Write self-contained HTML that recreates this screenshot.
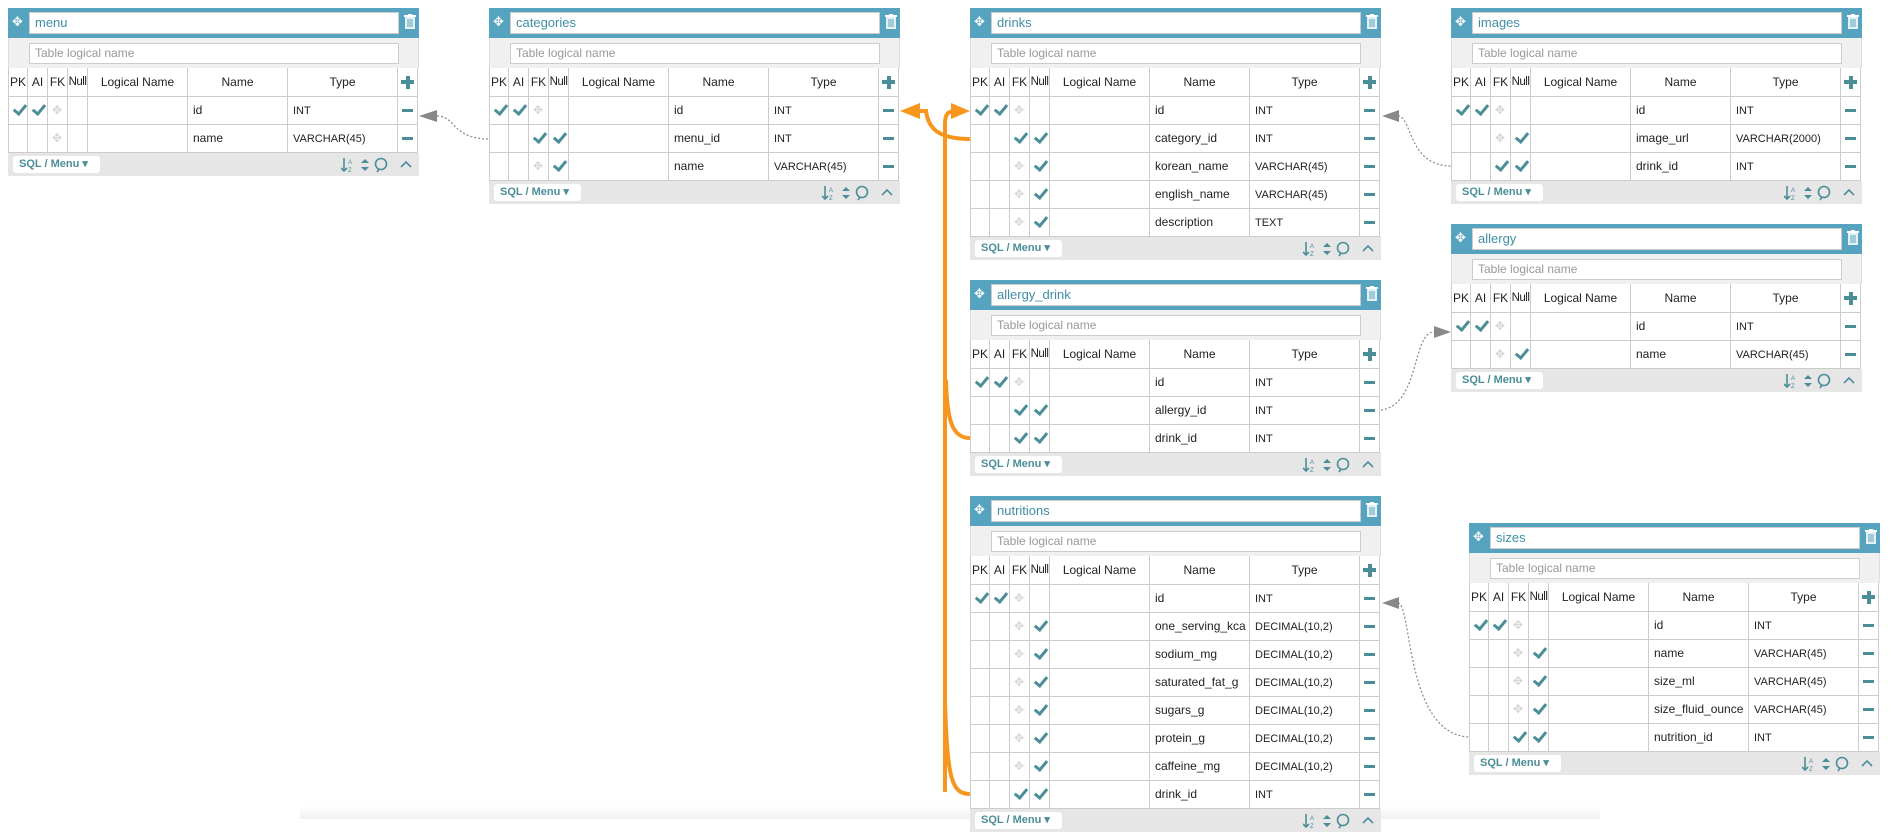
<!DOCTYPE html>
<html><head><meta charset="utf-8"><style>
body{margin:0;width:1902px;height:819px;overflow:hidden;background:#fff;font-family:"Liberation Sans",sans-serif;position:relative}
.t{position:absolute;width:411px;font-size:12px;color:#222;background:#fff}
.h{height:30px;background:#56a3bf;position:relative}
.mvw{position:absolute;left:4px;top:6px;color:#fff;font-size:13px}
.h .in{position:absolute;left:21px;top:4px;width:370px;height:22px;background:#fff;border:1px solid #ccc;box-sizing:border-box;color:#3f8ea6;font-size:13px;line-height:20px;padding-left:5px}
.tr{position:absolute;right:3px;top:6px}
.l{height:30px;background:#f0f0f0;position:relative;border-left:1px solid #ddd;border-right:1px solid #ddd;box-sizing:border-box}
.l .in2{position:absolute;left:20px;top:5px;width:370px;height:21px;background:#fff;border:1px solid #ccc;box-sizing:border-box;color:#999;font-size:12px;line-height:19px;padding-left:5px}
.r{display:grid;grid-template-columns:19px 20px 20px 20px 100px 100px 110px 20px;height:28px;border-left:1px solid #ccc}
.r i{font-style:normal;border-right:1px solid #ccc;border-bottom:1px solid #ccc;line-height:27px;position:relative;overflow:hidden;white-space:nowrap}
.r i:nth-child(6),.r i:nth-child(7){padding-left:5px}
.r i:nth-child(7){font-size:11px;line-height:28px}
.hd{height:29px}
.hd i{text-align:center;line-height:28px;font-size:12px;color:#222;padding-left:0!important}
.hd i:nth-child(4){font-size:11.5px;letter-spacing:-.5px}
.hd i:nth-child(7){font-size:12px}
.k{position:absolute;left:7px;top:5px;width:5px;height:10px;border-right:3px solid #4b8e98;border-bottom:3px solid #4b8e98;transform:rotate(40deg)}
.u{position:absolute;left:4px;top:0;color:#d4d4d4;font-size:12px}
.m::after{content:"";position:absolute;left:4px;top:12px;width:11px;height:3px;background:#4b8e98}
.p::before{content:"";position:absolute;left:3px;top:12px;width:13px;height:4px;background:#4b8e98}
.p::after{content:"";position:absolute;left:7.5px;top:7.5px;width:4px;height:13px;background:#4b8e98}
.f{height:23px;background:#e6e6e6;position:relative}
.sq{position:absolute;left:5px;top:3px;width:81px;height:17px;background:#fff;border-radius:3px;color:#4b8e98;font-weight:bold;font-size:11px;line-height:17px;padding-left:6px}
.fi{position:absolute;right:6px;top:4px}
svg.ln{position:absolute;left:0;top:0;pointer-events:none}
.bot{position:absolute;left:300px;top:806px;width:1300px;height:13px;background:linear-gradient(#fff,#f0f0f0)}
</style></head><body>
<div class="bot"></div>

<!-- menu -->
<div class="t" style="left:8px;top:8px">
<div class="h"><span class="mvw">✥</span><div class="in">menu</div><span class="tr"><svg width="12" height="16"><rect x="1" y="3" width="10" height="12" fill="#fff" opacity=".85"/><rect x="0" y="1" width="12" height="2" fill="#fff"/><rect x="4" y="0" width="4" height="2" fill="#fff"/><path d="M4 5v8M6 5v8M8 5v8" stroke="#56a3bf"/></svg></span></div>
<div class="l"><div class="in2">Table logical name</div></div>
<div class="r hd"><i>PK</i><i>AI</i><i>FK</i><i>Null</i><i>Logical Name</i><i>Name</i><i>Type</i><i class="p"></i></div>
<div class="r"><i><s class="k"></s></i><i><s class="k"></s></i><i><span class="u">✥</span></i><i></i><i></i><i>id</i><i>INT</i><i class="m"></i></div>
<div class="r"><i></i><i></i><i><span class="u">✥</span></i><i></i><i></i><i>name</i><i>VARCHAR(45)</i><i class="m"></i></div>
<div class="f"><span class="sq">SQL / Menu ▾</span><span class="fi"><svg width="72" height="16" fill="none" stroke="#4b8e98" stroke-width="1.6"><path d="M3 1v13M0 11l3 3 3-3"/><text x="7" y="7" font-size="6" fill="#4b8e98" stroke="none" font-family="Liberation Sans">A</text><text x="7" y="15" font-size="6" fill="#4b8e98" stroke="none" font-family="Liberation Sans">Z</text><path d="M20 6l4-4 4 4zM20 10l4 4 4-4z" fill="#4b8e98" stroke="none"/><circle cx="40" cy="7" r="5.5"/><path d="M38 12l-2 3"/><path d="M60 10l5-5 5 5"/></svg></span></div>
</div>

<!-- categories -->
<div class="t" style="left:489px;top:8px">
<div class="h"><span class="mvw">✥</span><div class="in">categories</div><span class="tr"><svg width="12" height="16"><rect x="1" y="3" width="10" height="12" fill="#fff" opacity=".85"/><rect x="0" y="1" width="12" height="2" fill="#fff"/><rect x="4" y="0" width="4" height="2" fill="#fff"/><path d="M4 5v8M6 5v8M8 5v8" stroke="#56a3bf"/></svg></span></div>
<div class="l"><div class="in2">Table logical name</div></div>
<div class="r hd"><i>PK</i><i>AI</i><i>FK</i><i>Null</i><i>Logical Name</i><i>Name</i><i>Type</i><i class="p"></i></div>
<div class="r"><i><s class="k"></s></i><i><s class="k"></s></i><i><span class="u">✥</span></i><i></i><i></i><i>id</i><i>INT</i><i class="m"></i></div>
<div class="r"><i></i><i></i><i><s class="k"></s></i><i><s class="k"></s></i><i></i><i>menu_id</i><i>INT</i><i class="m"></i></div>
<div class="r"><i></i><i></i><i><span class="u">✥</span></i><i><s class="k"></s></i><i></i><i>name</i><i>VARCHAR(45)</i><i class="m"></i></div>
<div class="f"><span class="sq">SQL / Menu ▾</span><span class="fi"><svg width="72" height="16" fill="none" stroke="#4b8e98" stroke-width="1.6"><path d="M3 1v13M0 11l3 3 3-3"/><text x="7" y="7" font-size="6" fill="#4b8e98" stroke="none" font-family="Liberation Sans">A</text><text x="7" y="15" font-size="6" fill="#4b8e98" stroke="none" font-family="Liberation Sans">Z</text><path d="M20 6l4-4 4 4zM20 10l4 4 4-4z" fill="#4b8e98" stroke="none"/><circle cx="40" cy="7" r="5.5"/><path d="M38 12l-2 3"/><path d="M60 10l5-5 5 5"/></svg></span></div>
</div>

<!-- drinks -->
<div class="t" style="left:970px;top:8px">
<div class="h"><span class="mvw">✥</span><div class="in">drinks</div><span class="tr"><svg width="12" height="16"><rect x="1" y="3" width="10" height="12" fill="#fff" opacity=".85"/><rect x="0" y="1" width="12" height="2" fill="#fff"/><rect x="4" y="0" width="4" height="2" fill="#fff"/><path d="M4 5v8M6 5v8M8 5v8" stroke="#56a3bf"/></svg></span></div>
<div class="l"><div class="in2">Table logical name</div></div>
<div class="r hd"><i>PK</i><i>AI</i><i>FK</i><i>Null</i><i>Logical Name</i><i>Name</i><i>Type</i><i class="p"></i></div>
<div class="r"><i><s class="k"></s></i><i><s class="k"></s></i><i><span class="u">✥</span></i><i></i><i></i><i>id</i><i>INT</i><i class="m"></i></div>
<div class="r"><i></i><i></i><i><s class="k"></s></i><i><s class="k"></s></i><i></i><i>category_id</i><i>INT</i><i class="m"></i></div>
<div class="r"><i></i><i></i><i><span class="u">✥</span></i><i><s class="k"></s></i><i></i><i>korean_name</i><i>VARCHAR(45)</i><i class="m"></i></div>
<div class="r"><i></i><i></i><i><span class="u">✥</span></i><i><s class="k"></s></i><i></i><i>english_name</i><i>VARCHAR(45)</i><i class="m"></i></div>
<div class="r"><i></i><i></i><i><span class="u">✥</span></i><i><s class="k"></s></i><i></i><i>description</i><i>TEXT</i><i class="m"></i></div>
<div class="f"><span class="sq">SQL / Menu ▾</span><span class="fi"><svg width="72" height="16" fill="none" stroke="#4b8e98" stroke-width="1.6"><path d="M3 1v13M0 11l3 3 3-3"/><text x="7" y="7" font-size="6" fill="#4b8e98" stroke="none" font-family="Liberation Sans">A</text><text x="7" y="15" font-size="6" fill="#4b8e98" stroke="none" font-family="Liberation Sans">Z</text><path d="M20 6l4-4 4 4zM20 10l4 4 4-4z" fill="#4b8e98" stroke="none"/><circle cx="40" cy="7" r="5.5"/><path d="M38 12l-2 3"/><path d="M60 10l5-5 5 5"/></svg></span></div>
</div>

<!-- images -->
<div class="t" style="left:1451px;top:8px">
<div class="h"><span class="mvw">✥</span><div class="in">images</div><span class="tr"><svg width="12" height="16"><rect x="1" y="3" width="10" height="12" fill="#fff" opacity=".85"/><rect x="0" y="1" width="12" height="2" fill="#fff"/><rect x="4" y="0" width="4" height="2" fill="#fff"/><path d="M4 5v8M6 5v8M8 5v8" stroke="#56a3bf"/></svg></span></div>
<div class="l"><div class="in2">Table logical name</div></div>
<div class="r hd"><i>PK</i><i>AI</i><i>FK</i><i>Null</i><i>Logical Name</i><i>Name</i><i>Type</i><i class="p"></i></div>
<div class="r"><i><s class="k"></s></i><i><s class="k"></s></i><i><span class="u">✥</span></i><i></i><i></i><i>id</i><i>INT</i><i class="m"></i></div>
<div class="r"><i></i><i></i><i><span class="u">✥</span></i><i><s class="k"></s></i><i></i><i>image_url</i><i>VARCHAR(2000)</i><i class="m"></i></div>
<div class="r"><i></i><i></i><i><s class="k"></s></i><i><s class="k"></s></i><i></i><i>drink_id</i><i>INT</i><i class="m"></i></div>
<div class="f"><span class="sq">SQL / Menu ▾</span><span class="fi"><svg width="72" height="16" fill="none" stroke="#4b8e98" stroke-width="1.6"><path d="M3 1v13M0 11l3 3 3-3"/><text x="7" y="7" font-size="6" fill="#4b8e98" stroke="none" font-family="Liberation Sans">A</text><text x="7" y="15" font-size="6" fill="#4b8e98" stroke="none" font-family="Liberation Sans">Z</text><path d="M20 6l4-4 4 4zM20 10l4 4 4-4z" fill="#4b8e98" stroke="none"/><circle cx="40" cy="7" r="5.5"/><path d="M38 12l-2 3"/><path d="M60 10l5-5 5 5"/></svg></span></div>
</div>

<!-- allergy -->
<div class="t" style="left:1451px;top:224px">
<div class="h"><span class="mvw">✥</span><div class="in">allergy</div><span class="tr"><svg width="12" height="16"><rect x="1" y="3" width="10" height="12" fill="#fff" opacity=".85"/><rect x="0" y="1" width="12" height="2" fill="#fff"/><rect x="4" y="0" width="4" height="2" fill="#fff"/><path d="M4 5v8M6 5v8M8 5v8" stroke="#56a3bf"/></svg></span></div>
<div class="l"><div class="in2">Table logical name</div></div>
<div class="r hd"><i>PK</i><i>AI</i><i>FK</i><i>Null</i><i>Logical Name</i><i>Name</i><i>Type</i><i class="p"></i></div>
<div class="r"><i><s class="k"></s></i><i><s class="k"></s></i><i><span class="u">✥</span></i><i></i><i></i><i>id</i><i>INT</i><i class="m"></i></div>
<div class="r"><i></i><i></i><i><span class="u">✥</span></i><i><s class="k"></s></i><i></i><i>name</i><i>VARCHAR(45)</i><i class="m"></i></div>
<div class="f"><span class="sq">SQL / Menu ▾</span><span class="fi"><svg width="72" height="16" fill="none" stroke="#4b8e98" stroke-width="1.6"><path d="M3 1v13M0 11l3 3 3-3"/><text x="7" y="7" font-size="6" fill="#4b8e98" stroke="none" font-family="Liberation Sans">A</text><text x="7" y="15" font-size="6" fill="#4b8e98" stroke="none" font-family="Liberation Sans">Z</text><path d="M20 6l4-4 4 4zM20 10l4 4 4-4z" fill="#4b8e98" stroke="none"/><circle cx="40" cy="7" r="5.5"/><path d="M38 12l-2 3"/><path d="M60 10l5-5 5 5"/></svg></span></div>
</div>

<!-- allergy_drink -->
<div class="t" style="left:970px;top:280px">
<div class="h"><span class="mvw">✥</span><div class="in">allergy_drink</div><span class="tr"><svg width="12" height="16"><rect x="1" y="3" width="10" height="12" fill="#fff" opacity=".85"/><rect x="0" y="1" width="12" height="2" fill="#fff"/><rect x="4" y="0" width="4" height="2" fill="#fff"/><path d="M4 5v8M6 5v8M8 5v8" stroke="#56a3bf"/></svg></span></div>
<div class="l"><div class="in2">Table logical name</div></div>
<div class="r hd"><i>PK</i><i>AI</i><i>FK</i><i>Null</i><i>Logical Name</i><i>Name</i><i>Type</i><i class="p"></i></div>
<div class="r"><i><s class="k"></s></i><i><s class="k"></s></i><i><span class="u">✥</span></i><i></i><i></i><i>id</i><i>INT</i><i class="m"></i></div>
<div class="r"><i></i><i></i><i><s class="k"></s></i><i><s class="k"></s></i><i></i><i>allergy_id</i><i>INT</i><i class="m"></i></div>
<div class="r"><i></i><i></i><i><s class="k"></s></i><i><s class="k"></s></i><i></i><i>drink_id</i><i>INT</i><i class="m"></i></div>
<div class="f"><span class="sq">SQL / Menu ▾</span><span class="fi"><svg width="72" height="16" fill="none" stroke="#4b8e98" stroke-width="1.6"><path d="M3 1v13M0 11l3 3 3-3"/><text x="7" y="7" font-size="6" fill="#4b8e98" stroke="none" font-family="Liberation Sans">A</text><text x="7" y="15" font-size="6" fill="#4b8e98" stroke="none" font-family="Liberation Sans">Z</text><path d="M20 6l4-4 4 4zM20 10l4 4 4-4z" fill="#4b8e98" stroke="none"/><circle cx="40" cy="7" r="5.5"/><path d="M38 12l-2 3"/><path d="M60 10l5-5 5 5"/></svg></span></div>
</div>

<!-- nutritions -->
<div class="t" style="left:970px;top:496px">
<div class="h"><span class="mvw">✥</span><div class="in">nutritions</div><span class="tr"><svg width="12" height="16"><rect x="1" y="3" width="10" height="12" fill="#fff" opacity=".85"/><rect x="0" y="1" width="12" height="2" fill="#fff"/><rect x="4" y="0" width="4" height="2" fill="#fff"/><path d="M4 5v8M6 5v8M8 5v8" stroke="#56a3bf"/></svg></span></div>
<div class="l"><div class="in2">Table logical name</div></div>
<div class="r hd"><i>PK</i><i>AI</i><i>FK</i><i>Null</i><i>Logical Name</i><i>Name</i><i>Type</i><i class="p"></i></div>
<div class="r"><i><s class="k"></s></i><i><s class="k"></s></i><i><span class="u">✥</span></i><i></i><i></i><i>id</i><i>INT</i><i class="m"></i></div>
<div class="r"><i></i><i></i><i><span class="u">✥</span></i><i><s class="k"></s></i><i></i><i>one_serving_kca</i><i>DECIMAL(10,2)</i><i class="m"></i></div>
<div class="r"><i></i><i></i><i><span class="u">✥</span></i><i><s class="k"></s></i><i></i><i>sodium_mg</i><i>DECIMAL(10,2)</i><i class="m"></i></div>
<div class="r"><i></i><i></i><i><span class="u">✥</span></i><i><s class="k"></s></i><i></i><i>saturated_fat_g</i><i>DECIMAL(10,2)</i><i class="m"></i></div>
<div class="r"><i></i><i></i><i><span class="u">✥</span></i><i><s class="k"></s></i><i></i><i>sugars_g</i><i>DECIMAL(10,2)</i><i class="m"></i></div>
<div class="r"><i></i><i></i><i><span class="u">✥</span></i><i><s class="k"></s></i><i></i><i>protein_g</i><i>DECIMAL(10,2)</i><i class="m"></i></div>
<div class="r"><i></i><i></i><i><span class="u">✥</span></i><i><s class="k"></s></i><i></i><i>caffeine_mg</i><i>DECIMAL(10,2)</i><i class="m"></i></div>
<div class="r"><i></i><i></i><i><s class="k"></s></i><i><s class="k"></s></i><i></i><i>drink_id</i><i>INT</i><i class="m"></i></div>
<div class="f"><span class="sq">SQL / Menu ▾</span><span class="fi"><svg width="72" height="16" fill="none" stroke="#4b8e98" stroke-width="1.6"><path d="M3 1v13M0 11l3 3 3-3"/><text x="7" y="7" font-size="6" fill="#4b8e98" stroke="none" font-family="Liberation Sans">A</text><text x="7" y="15" font-size="6" fill="#4b8e98" stroke="none" font-family="Liberation Sans">Z</text><path d="M20 6l4-4 4 4zM20 10l4 4 4-4z" fill="#4b8e98" stroke="none"/><circle cx="40" cy="7" r="5.5"/><path d="M38 12l-2 3"/><path d="M60 10l5-5 5 5"/></svg></span></div>
</div>

<!-- sizes -->
<div class="t" style="left:1469px;top:523px">
<div class="h"><span class="mvw">✥</span><div class="in">sizes</div><span class="tr"><svg width="12" height="16"><rect x="1" y="3" width="10" height="12" fill="#fff" opacity=".85"/><rect x="0" y="1" width="12" height="2" fill="#fff"/><rect x="4" y="0" width="4" height="2" fill="#fff"/><path d="M4 5v8M6 5v8M8 5v8" stroke="#56a3bf"/></svg></span></div>
<div class="l"><div class="in2">Table logical name</div></div>
<div class="r hd"><i>PK</i><i>AI</i><i>FK</i><i>Null</i><i>Logical Name</i><i>Name</i><i>Type</i><i class="p"></i></div>
<div class="r"><i><s class="k"></s></i><i><s class="k"></s></i><i><span class="u">✥</span></i><i></i><i></i><i>id</i><i>INT</i><i class="m"></i></div>
<div class="r"><i></i><i></i><i><span class="u">✥</span></i><i><s class="k"></s></i><i></i><i>name</i><i>VARCHAR(45)</i><i class="m"></i></div>
<div class="r"><i></i><i></i><i><span class="u">✥</span></i><i><s class="k"></s></i><i></i><i>size_ml</i><i>VARCHAR(45)</i><i class="m"></i></div>
<div class="r"><i></i><i></i><i><span class="u">✥</span></i><i><s class="k"></s></i><i></i><i>size_fluid_ounce</i><i>VARCHAR(45)</i><i class="m"></i></div>
<div class="r"><i></i><i></i><i><s class="k"></s></i><i><s class="k"></s></i><i></i><i>nutrition_id</i><i>INT</i><i class="m"></i></div>
<div class="f"><span class="sq">SQL / Menu ▾</span><span class="fi"><svg width="72" height="16" fill="none" stroke="#4b8e98" stroke-width="1.6"><path d="M3 1v13M0 11l3 3 3-3"/><text x="7" y="7" font-size="6" fill="#4b8e98" stroke="none" font-family="Liberation Sans">A</text><text x="7" y="15" font-size="6" fill="#4b8e98" stroke="none" font-family="Liberation Sans">Z</text><path d="M20 6l4-4 4 4zM20 10l4 4 4-4z" fill="#4b8e98" stroke="none"/><circle cx="40" cy="7" r="5.5"/><path d="M38 12l-2 3"/><path d="M60 10l5-5 5 5"/></svg></span></div>
</div>

<svg class="ln" width="1902" height="819">
<g fill="none" stroke="#f7961e" stroke-width="4">
<path d="M970,139 C938,139 928,128 926,111 L914,111"/>
<path d="M945,792 L945,124 C945,114 948,111 955,111"/>
<path d="M970,794 C952,794 947,780 945,700"/>
<path d="M970,438 C952,438 947,420 946,380"/>
</g>
<polygon points="900,111 920,103 920,119" fill="#f7961e"/>
<polygon points="970,111 951,103 951,119" fill="#f7961e"/>
<g fill="none" stroke="#888" stroke-width="1.2" stroke-dasharray="2 2">
<path d="M437,116 C456,116 452,139 489,139"/>
<path d="M1398,116 C1412,116 1408,166 1451,166"/>
<path d="M1381,410 C1420,405 1412,332 1434,332"/>
<path d="M1398,603 C1412,603 1405,734 1469,737"/>
</g>
<g fill="#888">
<polygon points="419,116 437,110 437,122"/>
<polygon points="1382,116 1399,110 1399,122"/>
<polygon points="1451,332 1434,326 1434,338"/>
<polygon points="1382,603 1399,597 1399,609"/>
</g>
</svg>
</body></html>
